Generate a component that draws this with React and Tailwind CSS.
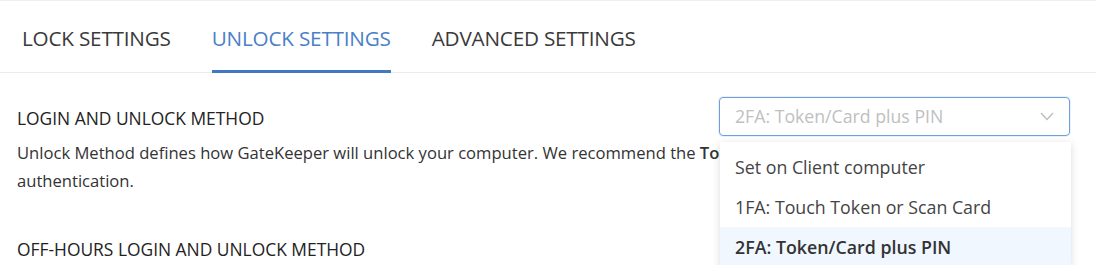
import React from "react";

const tabs = ["LOCK SETTINGS", "UNLOCK SETTINGS", "ADVANCED SETTINGS"];
const options = [
  "Set on Client computer",
  "1FA: Touch Token or Scan Card",
  "2FA: Token/Card plus PIN",
];

function Chevron() {
  return (
    <svg width="14" height="9" viewBox="0 0 14 9" fill="none">
      <path d="M1 1l6 6.5L13 1" stroke="#bdbdbd" strokeWidth="1.3" />
    </svg>
  );
}

export default function App() {
  const active = 1;
  const selected = 2;

  return (
    <div
      className="relative min-h-[265px] w-full overflow-hidden border-t border-[#eeeeee] bg-white text-[#333]"
      style={{ fontFamily: '"Open Sans", "Noto Sans", sans-serif' }}
    >
      {/* Tabs */}
      <div className="flex gap-[41px] border-b border-[#ececec] px-[22px]">
        {tabs.map((t, i) => (
          <div
            key={t}
            className={
              "relative -mb-px flex h-[72px] items-center pt-[6px] text-[20.7px] tracking-[-0.2px] " +
              (i === active
                ? "border-b-[3px] border-[#4178c4] text-[#4a80c8]"
                : "border-b-[3px] border-transparent text-[#3a3a3a]")
            }
          >
            {t}
          </div>
        ))}
      </div>

      {/* Login and unlock method */}
      <div className="px-[17px] pt-[24px]">
        <div className="flex items-center justify-between pr-[9px]">
          <h3 className="pt-[4px] text-[17.4px] font-medium text-[#222]">
            LOGIN AND UNLOCK METHOD
          </h3>
          <div className="relative w-[351px]">
            <div className="flex h-[39px] items-center justify-between rounded-[4px] border border-[#6d9fdc] px-[15px] shadow-[0_0_0_1px_rgba(109,159,220,0.15)]">
              <span className="text-[17.7px] text-[#c0c0c0]">
                2FA: Token/Card plus PIN
              </span>
              <Chevron />
            </div>
          </div>
        </div>
        <p className="mt-[3px] text-[16.6px] leading-[28px] text-[#333]">
          Unlock Method defines how GateKeeper will unlock your computer. We
          recommend the <b className="font-semibold">Token/Card plus PIN</b>{" "}
          method for two-factor authentication.
        </p>
      </div>

      {/* Off-hours */}
      <div className="px-[17px] pt-[35px]">
        <div className="flex h-[39px] items-center">
          <h3 className="text-[17.4px] font-medium text-[#222]">
            OFF-HOURS LOGIN AND UNLOCK METHOD
          </h3>
        </div>
      </div>

      {/* Open dropdown menu */}
      <div className="absolute left-[720px] top-[141px] w-[351px] bg-white pt-[5px] shadow-[0_2px_8px_rgba(0,0,0,0.15)]">
        {options.map((o, i) => (
          <div
            key={o}
            className={
              "flex h-[40px] items-center px-[15px] text-[17.8px] " +
              (i === selected
                ? "bg-[#f0f7ff] font-semibold text-[#333]"
                : "text-[#444]")
            }
          >
            {o}
          </div>
        ))}
      </div>
    </div>
  );
}
